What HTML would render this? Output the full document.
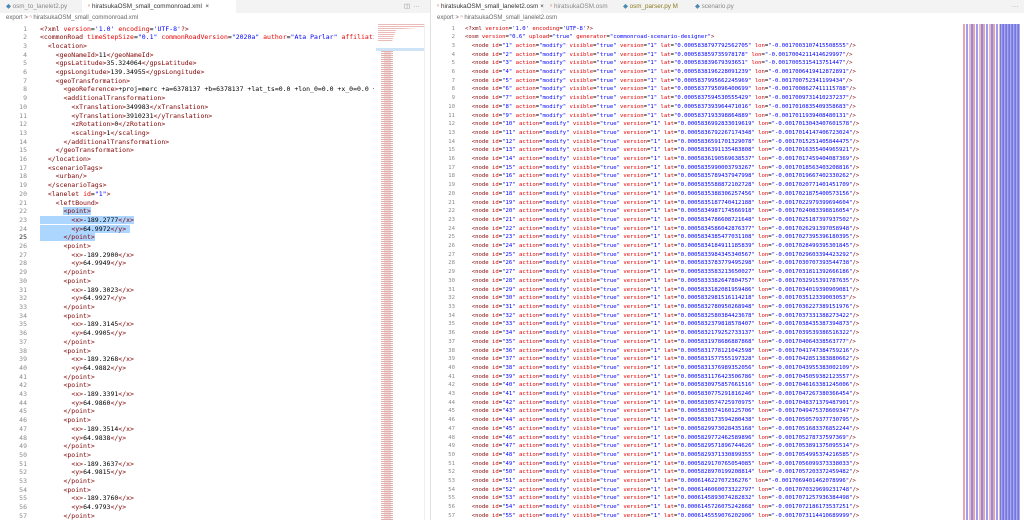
<!DOCTYPE html>
<html><head><meta charset="utf-8"><style>
*{margin:0;padding:0;box-sizing:border-box}
body{width:1024px;height:520px;overflow:hidden;background:#fff;position:relative;font-family:"Liberation Sans",sans-serif}
.tabbar{position:absolute;top:0;height:13px;background:#f3f3f3;font-size:6.3px;color:#888}
.tab{position:absolute;top:0;height:13px;line-height:13px;padding-left:6px;white-space:nowrap}
.tab.act{background:#fff;color:#333}
.crumb{position:absolute;top:13px;height:10px;line-height:10px;font-size:6px;color:#666;white-space:nowrap}
pre{position:absolute;font-family:"DejaVu Sans Mono",monospace;line-height:8.7px;white-space:pre;color:#000}
.ln{text-align:right;color:#8a8a8a}
.L{font-size:6.5px}.R{font-size:5.6px}
.t{color:#800000}.a{color:#e50000}.v{color:#0000ff}
.sel{background:#add6ff}
.x{color:#c77}
</style></head><body>
<div class="tabbar" style="left:0;width:430px">
<div class="tab" style="left:0"><span style="color:#4a8ab4">◆</span> osm_to_lanelet2.py</div>
<div class="tab act" style="left:82px;width:154px"><span style="color:#d08060">ⁿ</span> hiratsukaOSM_small_commonroad.xml &nbsp;×</div>
<div class="tab" style="left:398px">◫ &nbsp;···</div>
</div>
<div class="tabbar" style="left:431px;width:593px">
<div class="tab act" style="left:0;width:110px"><span style="color:#d08060">ⁿ</span> hiratsukaOSM_small_lanelet2.osm ×</div>
<div class="tab" style="left:113px"><span style="color:#d08060">ⁿ</span> hiratsukaOSM.osm</div>
<div class="tab" style="left:186px;color:#8a7a20"><span style="color:#4a8ab4">◆</span> osm_parser.py M</div>
<div class="tab" style="left:258px"><span style="color:#4a8ab4">◆</span> scenario.py</div>
<div class="tab" style="left:575px">···</div>
</div>
<div style="position:absolute;left:430px;top:0;width:1px;height:520px;background:#e0e0e0"></div>
<div class="crumb" style="left:6px">export &gt; <span style="color:#d08060">ⁿ</span> hiratsukaOSM_small_commonroad.xml</div>
<div class="crumb" style="left:437px">export &gt; <span style="color:#d08060">ⁿ</span> hiratsukaOSM_small_lanelet2.osm</div>

<!-- left minimap -->
<div style="position:absolute;left:378px;top:24px;width:46px;height:18px;background:repeating-linear-gradient(#e6aaa8 0 1px,transparent 1px 2px);opacity:.8;clip-path:polygon(0 0,100% 0,100% 20%,40% 30%,30% 100%,0 100%)"></div>
<div style="position:absolute;left:376px;top:48px;width:48px;height:3px;background:#cfe3f7"></div>
<div style="position:absolute;left:381px;top:51px;width:12px;height:469px;background:repeating-linear-gradient(#e2b0ae 0 1px,transparent 1px 2px)"></div>
<div style="position:absolute;left:384px;top:51px;width:7px;height:469px;background:repeating-linear-gradient(transparent 0 1px,#f3d8d6 1px 2px)"></div>
<div style="position:absolute;left:424px;top:24px;width:1px;height:496px;background:#eee"></div>

<!-- right minimap -->
<div style="position:absolute;left:963px;top:24px;width:37px;height:496px;background:repeating-linear-gradient(90deg,#e7a5a5 0 2px,#fff 2px 3px,#9c9cf0 3px 5px,#fff 5px 6px,#f0b8b8 6px 8px,#8c8ce8 8px 10px)"></div>
<div style="position:absolute;left:1000px;top:24px;width:20px;height:496px;background:repeating-linear-gradient(90deg,#7777e0 0 1px,#a9a9ee 1px 2px,#8787e6 2px 3px)"></div>

<pre class="ln L" style="left:0;top:24.5px;width:27px">1
2
3
4
5
6
7
8
9
10
11
12
13
14
15
16
17
18
19
20
21
22
23
24
<span style="color:#222">25</span>
26
27
28
29
30
31
32
33
34
35
36
37
38
39
40
41
42
43
44
45
46
47
48
49
50
51
52
53
54
55
56
57</pre>
<pre class="L" style="left:40px;top:24.5px;width:334px;overflow:hidden"><span class="t">&lt;?xml</span> <span class="a">version</span>=<span class="v">'1.0'</span> <span class="a">encoding</span>=<span class="v">'UTF-8'</span><span class="t">?&gt;</span>
<span class="t">&lt;commonRoad</span> <span class="a">timeStepSize</span>=<span class="v">"0.1"</span> <span class="a">commonRoadVersion</span>=<span class="v">"2020a"</span> <span class="a">author</span>=<span class="v">"Ata Parlar"</span> <span class="a">affiliation</span>
  <span class="t">&lt;location&gt;</span>
    <span class="t">&lt;geoNameId&gt;</span>11<span class="t">&lt;/geoNameId&gt;</span>
    <span class="t">&lt;gpsLatitude&gt;</span>35.324064<span class="t">&lt;/gpsLatitude&gt;</span>
    <span class="t">&lt;gpsLongitude&gt;</span>139.34955<span class="t">&lt;/gpsLongitude&gt;</span>
    <span class="t">&lt;geoTransformation&gt;</span>
      <span class="t">&lt;geoReference&gt;</span>+proj=merc +a=6378137 +b=6378137 +lat_ts=0.0 +lon_0=0.0 +x_0=0.0 +y_0
      <span class="t">&lt;additionalTransformation&gt;</span>
        <span class="t">&lt;xTranslation&gt;</span>349983<span class="t">&lt;/xTranslation&gt;</span>
        <span class="t">&lt;yTranslation&gt;</span>3910231<span class="t">&lt;/yTranslation&gt;</span>
        <span class="t">&lt;zRotation&gt;</span>0<span class="t">&lt;/zRotation&gt;</span>
        <span class="t">&lt;scaling&gt;</span>1<span class="t">&lt;/scaling&gt;</span>
      <span class="t">&lt;/additionalTransformation&gt;</span>
    <span class="t">&lt;/geoTransformation&gt;</span>
  <span class="t">&lt;/location&gt;</span>
  <span class="t">&lt;scenarioTags&gt;</span>
    <span class="t">&lt;urban/&gt;</span>
  <span class="t">&lt;/scenarioTags&gt;</span>
  <span class="t">&lt;lanelet</span> <span class="a">id</span>=<span class="v">"1"</span><span class="t">&gt;</span>
    <span class="t">&lt;leftBound&gt;</span>
      <span class="sel"><span class="t">&lt;point&gt;</span></span>
<span class="sel">        <span class="t">&lt;x&gt;</span>-189.2777<span class="t">&lt;/x&gt;</span></span>
<span class="sel">        <span class="t">&lt;y&gt;</span>64.9972<span class="t">&lt;/y&gt;</span> </span>
<span class="sel">      <span class="t">&lt;/point&gt;</span></span>
      <span class="t">&lt;point&gt;</span>
        <span class="t">&lt;x&gt;</span>-189.2900<span class="t">&lt;/x&gt;</span>
        <span class="t">&lt;y&gt;</span>64.9949<span class="t">&lt;/y&gt;</span>
      <span class="t">&lt;/point&gt;</span>
      <span class="t">&lt;point&gt;</span>
        <span class="t">&lt;x&gt;</span>-189.3023<span class="t">&lt;/x&gt;</span>
        <span class="t">&lt;y&gt;</span>64.9927<span class="t">&lt;/y&gt;</span>
      <span class="t">&lt;/point&gt;</span>
      <span class="t">&lt;point&gt;</span>
        <span class="t">&lt;x&gt;</span>-189.3145<span class="t">&lt;/x&gt;</span>
        <span class="t">&lt;y&gt;</span>64.9905<span class="t">&lt;/y&gt;</span>
      <span class="t">&lt;/point&gt;</span>
      <span class="t">&lt;point&gt;</span>
        <span class="t">&lt;x&gt;</span>-189.3268<span class="t">&lt;/x&gt;</span>
        <span class="t">&lt;y&gt;</span>64.9882<span class="t">&lt;/y&gt;</span>
      <span class="t">&lt;/point&gt;</span>
      <span class="t">&lt;point&gt;</span>
        <span class="t">&lt;x&gt;</span>-189.3391<span class="t">&lt;/x&gt;</span>
        <span class="t">&lt;y&gt;</span>64.9860<span class="t">&lt;/y&gt;</span>
      <span class="t">&lt;/point&gt;</span>
      <span class="t">&lt;point&gt;</span>
        <span class="t">&lt;x&gt;</span>-189.3514<span class="t">&lt;/x&gt;</span>
        <span class="t">&lt;y&gt;</span>64.9838<span class="t">&lt;/y&gt;</span>
      <span class="t">&lt;/point&gt;</span>
      <span class="t">&lt;point&gt;</span>
        <span class="t">&lt;x&gt;</span>-189.3637<span class="t">&lt;/x&gt;</span>
        <span class="t">&lt;y&gt;</span>64.9815<span class="t">&lt;/y&gt;</span>
      <span class="t">&lt;/point&gt;</span>
      <span class="t">&lt;point&gt;</span>
        <span class="t">&lt;x&gt;</span>-189.3760<span class="t">&lt;/x&gt;</span>
        <span class="t">&lt;y&gt;</span>64.9793<span class="t">&lt;/y&gt;</span>
      <span class="t">&lt;/point&gt;</span></pre>

<pre class="ln R" style="left:431px;top:24.5px;width:24px">1
2
3
4
5
6
7
8
9
10
11
12
13
14
15
16
17
18
19
20
21
22
23
24
25
26
27
28
29
30
31
32
33
34
35
36
37
38
39
40
41
42
43
44
45
46
47
48
49
50
51
52
53
54
55
56
57</pre>
<pre class="R" style="left:465px;top:24.5px;width:495px;overflow:hidden"><span class="t">&lt;?xml</span> <span class="a">version</span>=<span class="v">'1.0'</span> <span class="a">encoding</span>=<span class="v">'UTF-8'</span><span class="t">?&gt;</span>
<span class="t">&lt;osm</span> <span class="a">version</span>=<span class="v">"0.6"</span> <span class="a">upload</span>=<span class="v">"true"</span> <span class="a">generator</span>=<span class="v">"commonroad-scenario-designer"</span><span class="t">&gt;</span>
  <span class="t">&lt;node</span> <span class="a">id</span>=<span class="v">"1"</span> <span class="a">action</span>=<span class="v">"modify"</span> <span class="a">visible</span>=<span class="v">"true"</span> <span class="a">version</span>=<span class="v">"1"</span> <span class="a">lat</span>=<span class="v">"0.0005838797792562705"</span> <span class="a">lon</span>=<span class="v">"-0.0017003107415508555"</span><span class="t">/&gt;</span>
  <span class="t">&lt;node</span> <span class="a">id</span>=<span class="v">"2"</span> <span class="a">action</span>=<span class="v">"modify"</span> <span class="a">visible</span>=<span class="v">"true"</span> <span class="a">version</span>=<span class="v">"1"</span> <span class="a">lat</span>=<span class="v">"0.000583859735978178"</span> <span class="a">lon</span>=<span class="v">"-0.0017004211414629997"</span><span class="t">/&gt;</span>
  <span class="t">&lt;node</span> <span class="a">id</span>=<span class="v">"3"</span> <span class="a">action</span>=<span class="v">"modify"</span> <span class="a">visible</span>=<span class="v">"true"</span> <span class="a">version</span>=<span class="v">"1"</span> <span class="a">lat</span>=<span class="v">"0.000583839679393651"</span> <span class="a">lon</span>=<span class="v">"-0.0017005315413751447"</span><span class="t">/&gt;</span>
  <span class="t">&lt;node</span> <span class="a">id</span>=<span class="v">"4"</span> <span class="a">action</span>=<span class="v">"modify"</span> <span class="a">visible</span>=<span class="v">"true"</span> <span class="a">version</span>=<span class="v">"1"</span> <span class="a">lat</span>=<span class="v">"0.0005838196228091239"</span> <span class="a">lon</span>=<span class="v">"-0.0017006419412872891"</span><span class="t">/&gt;</span>
  <span class="t">&lt;node</span> <span class="a">id</span>=<span class="v">"5"</span> <span class="a">action</span>=<span class="v">"modify"</span> <span class="a">visible</span>=<span class="v">"true"</span> <span class="a">version</span>=<span class="v">"1"</span> <span class="a">lat</span>=<span class="v">"0.0005837995662245969"</span> <span class="a">lon</span>=<span class="v">"-0.001700752341199434"</span><span class="t">/&gt;</span>
  <span class="t">&lt;node</span> <span class="a">id</span>=<span class="v">"6"</span> <span class="a">action</span>=<span class="v">"modify"</span> <span class="a">visible</span>=<span class="v">"true"</span> <span class="a">version</span>=<span class="v">"1"</span> <span class="a">lat</span>=<span class="v">"0.0005837795096400699"</span> <span class="a">lon</span>=<span class="v">"-0.0017008627411115788"</span><span class="t">/&gt;</span>
  <span class="t">&lt;node</span> <span class="a">id</span>=<span class="v">"7"</span> <span class="a">action</span>=<span class="v">"modify"</span> <span class="a">visible</span>=<span class="v">"true"</span> <span class="a">version</span>=<span class="v">"1"</span> <span class="a">lat</span>=<span class="v">"0.0005837594530555429"</span> <span class="a">lon</span>=<span class="v">"-0.0017009731410237237"</span><span class="t">/&gt;</span>
  <span class="t">&lt;node</span> <span class="a">id</span>=<span class="v">"8"</span> <span class="a">action</span>=<span class="v">"modify"</span> <span class="a">visible</span>=<span class="v">"true"</span> <span class="a">version</span>=<span class="v">"1"</span> <span class="a">lat</span>=<span class="v">"0.0005837393964471016"</span> <span class="a">lon</span>=<span class="v">"-0.0017010835409358683"</span><span class="t">/&gt;</span>
  <span class="t">&lt;node</span> <span class="a">id</span>=<span class="v">"9"</span> <span class="a">action</span>=<span class="v">"modify"</span> <span class="a">visible</span>=<span class="v">"true"</span> <span class="a">version</span>=<span class="v">"1"</span> <span class="a">lat</span>=<span class="v">"0.0005837193398864889"</span> <span class="a">lon</span>=<span class="v">"-0.0017011939408480131"</span><span class="t">/&gt;</span>
  <span class="t">&lt;node</span> <span class="a">id</span>=<span class="v">"10"</span> <span class="a">action</span>=<span class="v">"modify"</span> <span class="a">visible</span>=<span class="v">"true"</span> <span class="a">version</span>=<span class="v">"1"</span> <span class="a">lat</span>=<span class="v">"0.0005836992833019619"</span> <span class="a">lon</span>=<span class="v">"-0.0017013043407601578"</span><span class="t">/&gt;</span>
  <span class="t">&lt;node</span> <span class="a">id</span>=<span class="v">"11"</span> <span class="a">action</span>=<span class="v">"modify"</span> <span class="a">visible</span>=<span class="v">"true"</span> <span class="a">version</span>=<span class="v">"1"</span> <span class="a">lat</span>=<span class="v">"0.0005836792267174348"</span> <span class="a">lon</span>=<span class="v">"-0.0017014147406723024"</span><span class="t">/&gt;</span>
  <span class="t">&lt;node</span> <span class="a">id</span>=<span class="v">"12"</span> <span class="a">action</span>=<span class="v">"modify"</span> <span class="a">visible</span>=<span class="v">"true"</span> <span class="a">version</span>=<span class="v">"1"</span> <span class="a">lat</span>=<span class="v">"0.0005836591701329078"</span> <span class="a">lon</span>=<span class="v">"-0.0017015251405844475"</span><span class="t">/&gt;</span>
  <span class="t">&lt;node</span> <span class="a">id</span>=<span class="v">"13"</span> <span class="a">action</span>=<span class="v">"modify"</span> <span class="a">visible</span>=<span class="v">"true"</span> <span class="a">version</span>=<span class="v">"1"</span> <span class="a">lat</span>=<span class="v">"0.0005836391135483808"</span> <span class="a">lon</span>=<span class="v">"-0.0017016355404965921"</span><span class="t">/&gt;</span>
  <span class="t">&lt;node</span> <span class="a">id</span>=<span class="v">"14"</span> <span class="a">action</span>=<span class="v">"modify"</span> <span class="a">visible</span>=<span class="v">"true"</span> <span class="a">version</span>=<span class="v">"1"</span> <span class="a">lat</span>=<span class="v">"0.0005836190569638537"</span> <span class="a">lon</span>=<span class="v">"-0.0017017459404087369"</span><span class="t">/&gt;</span>
  <span class="t">&lt;node</span> <span class="a">id</span>=<span class="v">"15"</span> <span class="a">action</span>=<span class="v">"modify"</span> <span class="a">visible</span>=<span class="v">"true"</span> <span class="a">version</span>=<span class="v">"1"</span> <span class="a">lat</span>=<span class="v">"0.0005835990003793267"</span> <span class="a">lon</span>=<span class="v">"-0.0017018563403208816"</span><span class="t">/&gt;</span>
  <span class="t">&lt;node</span> <span class="a">id</span>=<span class="v">"16"</span> <span class="a">action</span>=<span class="v">"modify"</span> <span class="a">visible</span>=<span class="v">"true"</span> <span class="a">version</span>=<span class="v">"1"</span> <span class="a">lat</span>=<span class="v">"0.0005835789437947998"</span> <span class="a">lon</span>=<span class="v">"-0.0017019667402330262"</span><span class="t">/&gt;</span>
  <span class="t">&lt;node</span> <span class="a">id</span>=<span class="v">"17"</span> <span class="a">action</span>=<span class="v">"modify"</span> <span class="a">visible</span>=<span class="v">"true"</span> <span class="a">version</span>=<span class="v">"1"</span> <span class="a">lat</span>=<span class="v">"0.0005835588872102728"</span> <span class="a">lon</span>=<span class="v">"-0.0017020771401451709"</span><span class="t">/&gt;</span>
  <span class="t">&lt;node</span> <span class="a">id</span>=<span class="v">"18"</span> <span class="a">action</span>=<span class="v">"modify"</span> <span class="a">visible</span>=<span class="v">"true"</span> <span class="a">version</span>=<span class="v">"1"</span> <span class="a">lat</span>=<span class="v">"0.0005835388306257456"</span> <span class="a">lon</span>=<span class="v">"-0.0017021875400573156"</span><span class="t">/&gt;</span>
  <span class="t">&lt;node</span> <span class="a">id</span>=<span class="v">"19"</span> <span class="a">action</span>=<span class="v">"modify"</span> <span class="a">visible</span>=<span class="v">"true"</span> <span class="a">version</span>=<span class="v">"1"</span> <span class="a">lat</span>=<span class="v">"0.0005835187740412188"</span> <span class="a">lon</span>=<span class="v">"-0.0017022979399694604"</span><span class="t">/&gt;</span>
  <span class="t">&lt;node</span> <span class="a">id</span>=<span class="v">"20"</span> <span class="a">action</span>=<span class="v">"modify"</span> <span class="a">visible</span>=<span class="v">"true"</span> <span class="a">version</span>=<span class="v">"1"</span> <span class="a">lat</span>=<span class="v">"0.0005834987174566918"</span> <span class="a">lon</span>=<span class="v">"-0.0017024083398816054"</span><span class="t">/&gt;</span>
  <span class="t">&lt;node</span> <span class="a">id</span>=<span class="v">"21"</span> <span class="a">action</span>=<span class="v">"modify"</span> <span class="a">visible</span>=<span class="v">"true"</span> <span class="a">version</span>=<span class="v">"1"</span> <span class="a">lat</span>=<span class="v">"0.0005834786608721648"</span> <span class="a">lon</span>=<span class="v">"-0.0017025187397937502"</span><span class="t">/&gt;</span>
  <span class="t">&lt;node</span> <span class="a">id</span>=<span class="v">"22"</span> <span class="a">action</span>=<span class="v">"modify"</span> <span class="a">visible</span>=<span class="v">"true"</span> <span class="a">version</span>=<span class="v">"1"</span> <span class="a">lat</span>=<span class="v">"0.0005834586042876377"</span> <span class="a">lon</span>=<span class="v">"-0.0017026291397058948"</span><span class="t">/&gt;</span>
  <span class="t">&lt;node</span> <span class="a">id</span>=<span class="v">"23"</span> <span class="a">action</span>=<span class="v">"modify"</span> <span class="a">visible</span>=<span class="v">"true"</span> <span class="a">version</span>=<span class="v">"1"</span> <span class="a">lat</span>=<span class="v">"0.0005834385477031108"</span> <span class="a">lon</span>=<span class="v">"-0.0017027395396180395"</span><span class="t">/&gt;</span>
  <span class="t">&lt;node</span> <span class="a">id</span>=<span class="v">"24"</span> <span class="a">action</span>=<span class="v">"modify"</span> <span class="a">visible</span>=<span class="v">"true"</span> <span class="a">version</span>=<span class="v">"1"</span> <span class="a">lat</span>=<span class="v">"0.0005834184911185839"</span> <span class="a">lon</span>=<span class="v">"-0.0017028499395301845"</span><span class="t">/&gt;</span>
  <span class="t">&lt;node</span> <span class="a">id</span>=<span class="v">"25"</span> <span class="a">action</span>=<span class="v">"modify"</span> <span class="a">visible</span>=<span class="v">"true"</span> <span class="a">version</span>=<span class="v">"1"</span> <span class="a">lat</span>=<span class="v">"0.0005833984345340567"</span> <span class="a">lon</span>=<span class="v">"-0.0017029603394423292"</span><span class="t">/&gt;</span>
  <span class="t">&lt;node</span> <span class="a">id</span>=<span class="v">"26"</span> <span class="a">action</span>=<span class="v">"modify"</span> <span class="a">visible</span>=<span class="v">"true"</span> <span class="a">version</span>=<span class="v">"1"</span> <span class="a">lat</span>=<span class="v">"0.0005833783779495298"</span> <span class="a">lon</span>=<span class="v">"-0.0017030707393544738"</span><span class="t">/&gt;</span>
  <span class="t">&lt;node</span> <span class="a">id</span>=<span class="v">"27"</span> <span class="a">action</span>=<span class="v">"modify"</span> <span class="a">visible</span>=<span class="v">"true"</span> <span class="a">version</span>=<span class="v">"1"</span> <span class="a">lat</span>=<span class="v">"0.0005833583213650027"</span> <span class="a">lon</span>=<span class="v">"-0.0017031811392666186"</span><span class="t">/&gt;</span>
  <span class="t">&lt;node</span> <span class="a">id</span>=<span class="v">"28"</span> <span class="a">action</span>=<span class="v">"modify"</span> <span class="a">visible</span>=<span class="v">"true"</span> <span class="a">version</span>=<span class="v">"1"</span> <span class="a">lat</span>=<span class="v">"0.0005833382647804757"</span> <span class="a">lon</span>=<span class="v">"-0.0017032915391787635"</span><span class="t">/&gt;</span>
  <span class="t">&lt;node</span> <span class="a">id</span>=<span class="v">"29"</span> <span class="a">action</span>=<span class="v">"modify"</span> <span class="a">visible</span>=<span class="v">"true"</span> <span class="a">version</span>=<span class="v">"1"</span> <span class="a">lat</span>=<span class="v">"0.0005833182081959486"</span> <span class="a">lon</span>=<span class="v">"-0.0017034019390909081"</span><span class="t">/&gt;</span>
  <span class="t">&lt;node</span> <span class="a">id</span>=<span class="v">"30"</span> <span class="a">action</span>=<span class="v">"modify"</span> <span class="a">visible</span>=<span class="v">"true"</span> <span class="a">version</span>=<span class="v">"1"</span> <span class="a">lat</span>=<span class="v">"0.0005832981516114218"</span> <span class="a">lon</span>=<span class="v">"-0.001703512339003053"</span><span class="t">/&gt;</span>
  <span class="t">&lt;node</span> <span class="a">id</span>=<span class="v">"31"</span> <span class="a">action</span>=<span class="v">"modify"</span> <span class="a">visible</span>=<span class="v">"true"</span> <span class="a">version</span>=<span class="v">"1"</span> <span class="a">lat</span>=<span class="v">"0.0005832780950268948"</span> <span class="a">lon</span>=<span class="v">"-0.0017036227389151976"</span><span class="t">/&gt;</span>
  <span class="t">&lt;node</span> <span class="a">id</span>=<span class="v">"32"</span> <span class="a">action</span>=<span class="v">"modify"</span> <span class="a">visible</span>=<span class="v">"true"</span> <span class="a">version</span>=<span class="v">"1"</span> <span class="a">lat</span>=<span class="v">"0.0005832580384423678"</span> <span class="a">lon</span>=<span class="v">"-0.0017037331388273422"</span><span class="t">/&gt;</span>
  <span class="t">&lt;node</span> <span class="a">id</span>=<span class="v">"33"</span> <span class="a">action</span>=<span class="v">"modify"</span> <span class="a">visible</span>=<span class="v">"true"</span> <span class="a">version</span>=<span class="v">"1"</span> <span class="a">lat</span>=<span class="v">"0.0005832379818578407"</span> <span class="a">lon</span>=<span class="v">"-0.0017038435387394873"</span><span class="t">/&gt;</span>
  <span class="t">&lt;node</span> <span class="a">id</span>=<span class="v">"34"</span> <span class="a">action</span>=<span class="v">"modify"</span> <span class="a">visible</span>=<span class="v">"true"</span> <span class="a">version</span>=<span class="v">"1"</span> <span class="a">lat</span>=<span class="v">"0.0005832179252733137"</span> <span class="a">lon</span>=<span class="v">"-0.0017039539386516322"</span><span class="t">/&gt;</span>
  <span class="t">&lt;node</span> <span class="a">id</span>=<span class="v">"35"</span> <span class="a">action</span>=<span class="v">"modify"</span> <span class="a">visible</span>=<span class="v">"true"</span> <span class="a">version</span>=<span class="v">"1"</span> <span class="a">lat</span>=<span class="v">"0.0005831978686887868"</span> <span class="a">lon</span>=<span class="v">"-0.001704064338563777"</span><span class="t">/&gt;</span>
  <span class="t">&lt;node</span> <span class="a">id</span>=<span class="v">"36"</span> <span class="a">action</span>=<span class="v">"modify"</span> <span class="a">visible</span>=<span class="v">"true"</span> <span class="a">version</span>=<span class="v">"1"</span> <span class="a">lat</span>=<span class="v">"0.0005831778121042598"</span> <span class="a">lon</span>=<span class="v">"-0.0017041747384759216"</span><span class="t">/&gt;</span>
  <span class="t">&lt;node</span> <span class="a">id</span>=<span class="v">"37"</span> <span class="a">action</span>=<span class="v">"modify"</span> <span class="a">visible</span>=<span class="v">"true"</span> <span class="a">version</span>=<span class="v">"1"</span> <span class="a">lat</span>=<span class="v">"0.0005831577555197328"</span> <span class="a">lon</span>=<span class="v">"-0.0017042851383880662"</span><span class="t">/&gt;</span>
  <span class="t">&lt;node</span> <span class="a">id</span>=<span class="v">"38"</span> <span class="a">action</span>=<span class="v">"modify"</span> <span class="a">visible</span>=<span class="v">"true"</span> <span class="a">version</span>=<span class="v">"1"</span> <span class="a">lat</span>=<span class="v">"0.0005831376989352056"</span> <span class="a">lon</span>=<span class="v">"-0.0017043955383002109"</span><span class="t">/&gt;</span>
  <span class="t">&lt;node</span> <span class="a">id</span>=<span class="v">"39"</span> <span class="a">action</span>=<span class="v">"modify"</span> <span class="a">visible</span>=<span class="v">"true"</span> <span class="a">version</span>=<span class="v">"1"</span> <span class="a">lat</span>=<span class="v">"0.0005831176423506786"</span> <span class="a">lon</span>=<span class="v">"-0.0017045059382123557"</span><span class="t">/&gt;</span>
  <span class="t">&lt;node</span> <span class="a">id</span>=<span class="v">"40"</span> <span class="a">action</span>=<span class="v">"modify"</span> <span class="a">visible</span>=<span class="v">"true"</span> <span class="a">version</span>=<span class="v">"1"</span> <span class="a">lat</span>=<span class="v">"0.0005830975857661516"</span> <span class="a">lon</span>=<span class="v">"-0.0017046163381245006"</span><span class="t">/&gt;</span>
  <span class="t">&lt;node</span> <span class="a">id</span>=<span class="v">"41"</span> <span class="a">action</span>=<span class="v">"modify"</span> <span class="a">visible</span>=<span class="v">"true"</span> <span class="a">version</span>=<span class="v">"1"</span> <span class="a">lat</span>=<span class="v">"0.0005830775291816246"</span> <span class="a">lon</span>=<span class="v">"-0.0017047267380366454"</span><span class="t">/&gt;</span>
  <span class="t">&lt;node</span> <span class="a">id</span>=<span class="v">"42"</span> <span class="a">action</span>=<span class="v">"modify"</span> <span class="a">visible</span>=<span class="v">"true"</span> <span class="a">version</span>=<span class="v">"1"</span> <span class="a">lat</span>=<span class="v">"0.0005830574725970975"</span> <span class="a">lon</span>=<span class="v">"-0.0017048371379487901"</span><span class="t">/&gt;</span>
  <span class="t">&lt;node</span> <span class="a">id</span>=<span class="v">"43"</span> <span class="a">action</span>=<span class="v">"modify"</span> <span class="a">visible</span>=<span class="v">"true"</span> <span class="a">version</span>=<span class="v">"1"</span> <span class="a">lat</span>=<span class="v">"0.0005830374160125706"</span> <span class="a">lon</span>=<span class="v">"-0.0017049475378609347"</span><span class="t">/&gt;</span>
  <span class="t">&lt;node</span> <span class="a">id</span>=<span class="v">"44"</span> <span class="a">action</span>=<span class="v">"modify"</span> <span class="a">visible</span>=<span class="v">"true"</span> <span class="a">version</span>=<span class="v">"1"</span> <span class="a">lat</span>=<span class="v">"0.0005830173594280438"</span> <span class="a">lon</span>=<span class="v">"-0.0017050579377730795"</span><span class="t">/&gt;</span>
  <span class="t">&lt;node</span> <span class="a">id</span>=<span class="v">"45"</span> <span class="a">action</span>=<span class="v">"modify"</span> <span class="a">visible</span>=<span class="v">"true"</span> <span class="a">version</span>=<span class="v">"1"</span> <span class="a">lat</span>=<span class="v">"0.0005829973028435168"</span> <span class="a">lon</span>=<span class="v">"-0.0017051683376852244"</span><span class="t">/&gt;</span>
  <span class="t">&lt;node</span> <span class="a">id</span>=<span class="v">"46"</span> <span class="a">action</span>=<span class="v">"modify"</span> <span class="a">visible</span>=<span class="v">"true"</span> <span class="a">version</span>=<span class="v">"1"</span> <span class="a">lat</span>=<span class="v">"0.0005829772462589896"</span> <span class="a">lon</span>=<span class="v">"-0.001705278737597369"</span><span class="t">/&gt;</span>
  <span class="t">&lt;node</span> <span class="a">id</span>=<span class="v">"47"</span> <span class="a">action</span>=<span class="v">"modify"</span> <span class="a">visible</span>=<span class="v">"true"</span> <span class="a">version</span>=<span class="v">"1"</span> <span class="a">lat</span>=<span class="v">"0.0005829571896744626"</span> <span class="a">lon</span>=<span class="v">"-0.0017053891375095514"</span><span class="t">/&gt;</span>
  <span class="t">&lt;node</span> <span class="a">id</span>=<span class="v">"48"</span> <span class="a">action</span>=<span class="v">"modify"</span> <span class="a">visible</span>=<span class="v">"true"</span> <span class="a">version</span>=<span class="v">"1"</span> <span class="a">lat</span>=<span class="v">"0.0005829371330899355"</span> <span class="a">lon</span>=<span class="v">"-0.0017054995374216585"</span><span class="t">/&gt;</span>
  <span class="t">&lt;node</span> <span class="a">id</span>=<span class="v">"49"</span> <span class="a">action</span>=<span class="v">"modify"</span> <span class="a">visible</span>=<span class="v">"true"</span> <span class="a">version</span>=<span class="v">"1"</span> <span class="a">lat</span>=<span class="v">"0.0005829170765054085"</span> <span class="a">lon</span>=<span class="v">"-0.0017056099373338033"</span><span class="t">/&gt;</span>
  <span class="t">&lt;node</span> <span class="a">id</span>=<span class="v">"50"</span> <span class="a">action</span>=<span class="v">"modify"</span> <span class="a">visible</span>=<span class="v">"true"</span> <span class="a">version</span>=<span class="v">"1"</span> <span class="a">lat</span>=<span class="v">"0.0005828970199208814"</span> <span class="a">lon</span>=<span class="v">"-0.0017057203372459482"</span><span class="t">/&gt;</span>
  <span class="t">&lt;node</span> <span class="a">id</span>=<span class="v">"51"</span> <span class="a">action</span>=<span class="v">"modify"</span> <span class="a">visible</span>=<span class="v">"true"</span> <span class="a">version</span>=<span class="v">"1"</span> <span class="a">lat</span>=<span class="v">"0.000614622707236276"</span> <span class="a">lon</span>=<span class="v">"-0.0017069401462078996"</span><span class="t">/&gt;</span>
  <span class="t">&lt;node</span> <span class="a">id</span>=<span class="v">"52"</span> <span class="a">action</span>=<span class="v">"modify"</span> <span class="a">visible</span>=<span class="v">"true"</span> <span class="a">version</span>=<span class="v">"1"</span> <span class="a">lat</span>=<span class="v">"0.0006146060073322797"</span> <span class="a">lon</span>=<span class="v">"-0.0017070329699231748"</span><span class="t">/&gt;</span>
  <span class="t">&lt;node</span> <span class="a">id</span>=<span class="v">"53"</span> <span class="a">action</span>=<span class="v">"modify"</span> <span class="a">visible</span>=<span class="v">"true"</span> <span class="a">version</span>=<span class="v">"1"</span> <span class="a">lat</span>=<span class="v">"0.0006145893074282832"</span> <span class="a">lon</span>=<span class="v">"-0.0017071257936384498"</span><span class="t">/&gt;</span>
  <span class="t">&lt;node</span> <span class="a">id</span>=<span class="v">"54"</span> <span class="a">action</span>=<span class="v">"modify"</span> <span class="a">visible</span>=<span class="v">"true"</span> <span class="a">version</span>=<span class="v">"1"</span> <span class="a">lat</span>=<span class="v">"0.0006145726075242868"</span> <span class="a">lon</span>=<span class="v">"-0.0017072186173537251"</span><span class="t">/&gt;</span>
  <span class="t">&lt;node</span> <span class="a">id</span>=<span class="v">"55"</span> <span class="a">action</span>=<span class="v">"modify"</span> <span class="a">visible</span>=<span class="v">"true"</span> <span class="a">version</span>=<span class="v">"1"</span> <span class="a">lat</span>=<span class="v">"0.0006145559076202906"</span> <span class="a">lon</span>=<span class="v">"-0.0017073114410689999"</span><span class="t">/&gt;</span></pre>
</body></html>
